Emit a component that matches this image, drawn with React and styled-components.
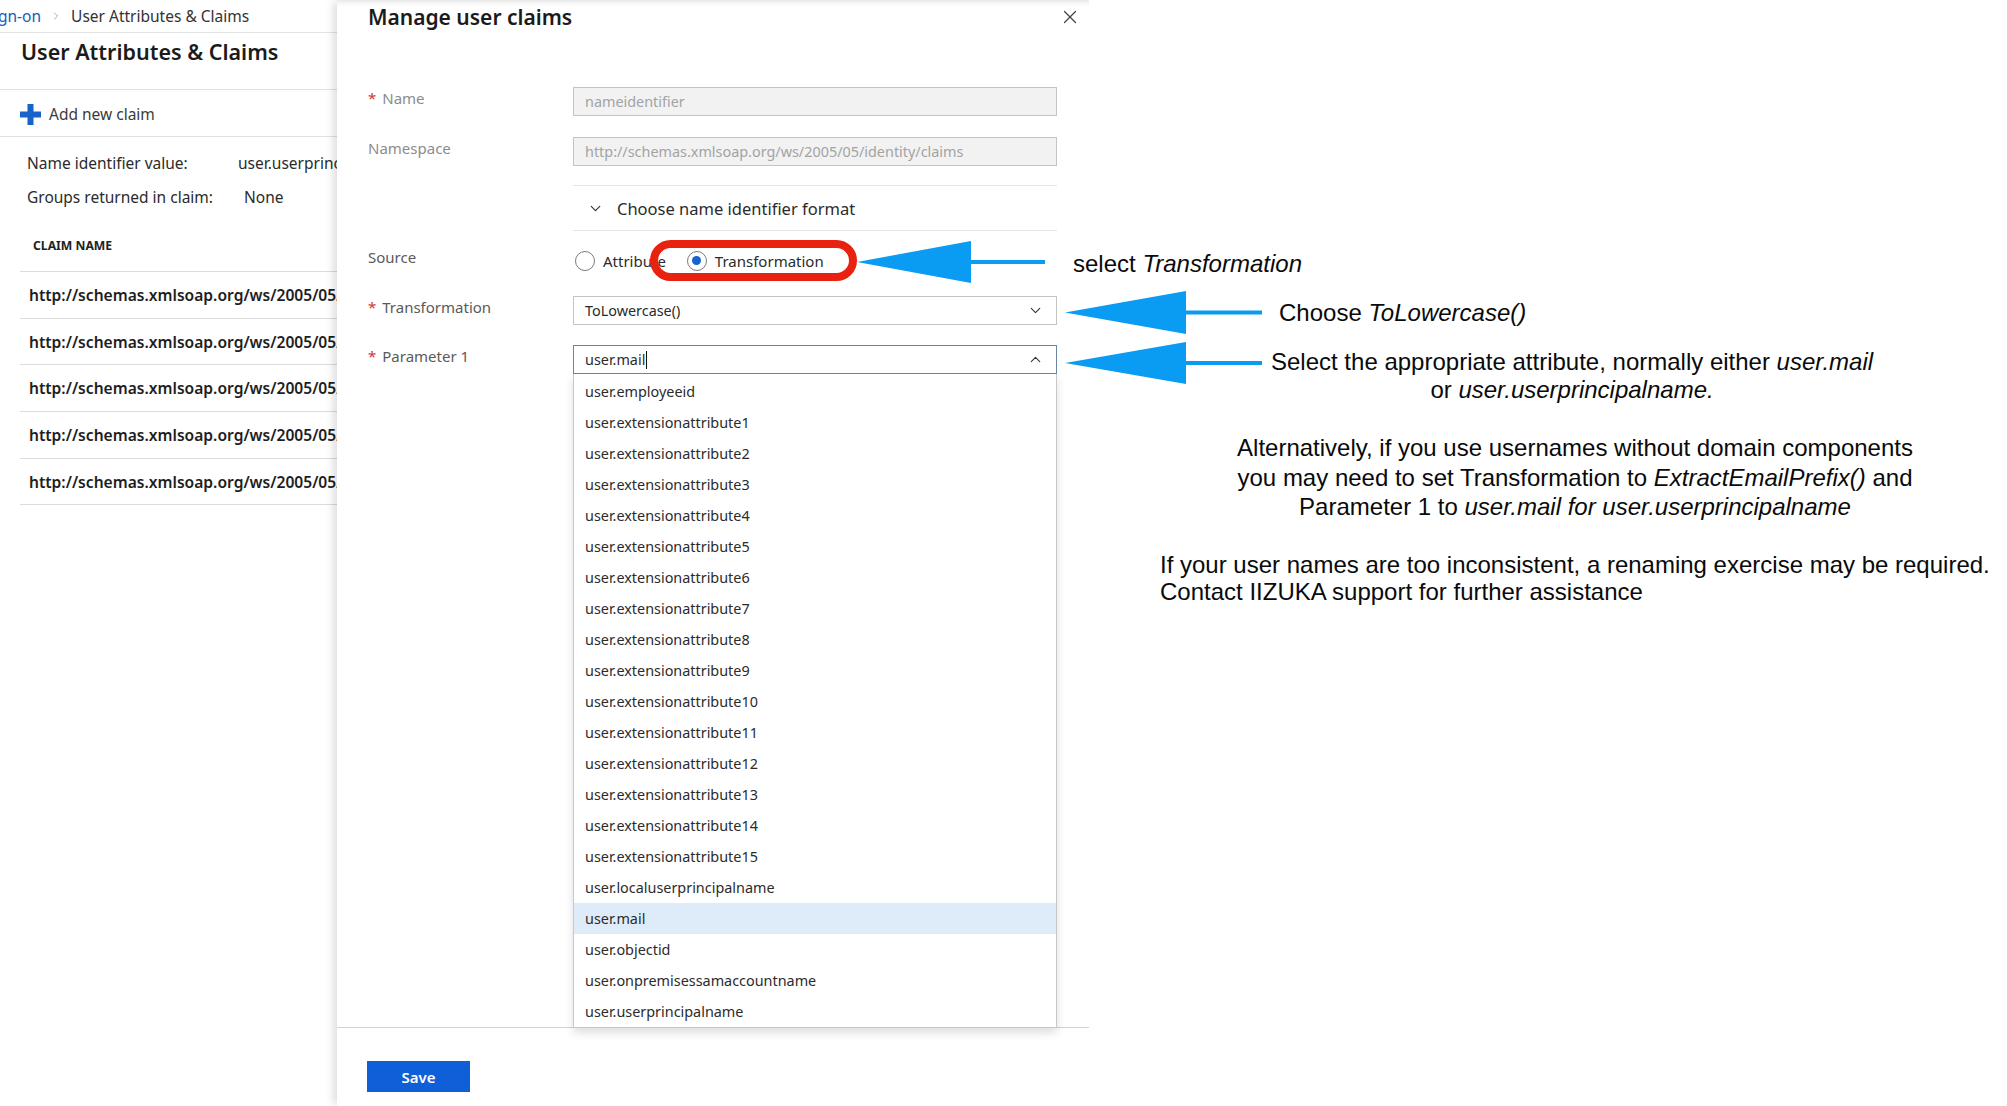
import React from "react"
import styled, { createGlobalStyle } from "styled-components"
import { ChevronDown, ChevronUp, ChevronRight, X } from "lucide-react"

const claims = [
  "http://schemas.xmlsoap.org/ws/2005/05/identity/claims/emailaddress",
  "http://schemas.xmlsoap.org/ws/2005/05/identity/claims/givenname",
  "http://schemas.xmlsoap.org/ws/2005/05/identity/claims/name",
  "http://schemas.xmlsoap.org/ws/2005/05/identity/claims/surname",
  "http://schemas.xmlsoap.org/ws/2005/05/identity/claims/nameidentifier",
]

const attributes = [
  "user.employeeid",
  ...Array.from({ length: 15 }, (_, i) => `user.extensionattribute${i + 1}`),
  "user.localuserprincipalname",
  "user.mail",
  "user.objectid",
  "user.onpremisessamaccountname",
  "user.userprincipalname",
]

const App = () => {
  return (
    <Page>
      <GlobalStyle />
      <LeftPanel>
        <Breadcrumb>
          <CrumbLink>gn-on</CrumbLink>
          <ChevronRight size={12} color="#8a8a8a" strokeWidth={1.5} />
          <span>User Attributes &amp; Claims</span>
        </Breadcrumb>
        <PanelTitle>User Attributes &amp; Claims</PanelTitle>
        <Toolbar>
          <PlusIcon />
          Add new claim
        </Toolbar>
        <Info>
          <InfoRow valueX={211}>
            <span>Name identifier value:</span>
            <Clip>user.userprincipalname</Clip>
          </InfoRow>
          <InfoRow valueX={217}>
            <span>Groups returned in claim:</span>
            <span>None</span>
          </InfoRow>
        </Info>
        <ClaimHeader>CLAIM NAME</ClaimHeader>
        {claims.map((c) => (
          <ClaimRow key={c}>
            <Clip>{c}</Clip>
          </ClaimRow>
        ))}
      </LeftPanel>

      <Modal>
        <ModalHeader>
          <ModalTitle>Manage user claims</ModalTitle>
          <X size={22} strokeWidth={1.3} color="#444" />
        </ModalHeader>

        <Form>
          <FormRow>
            <Label muted required>Name</Label>
            <Input disabled>nameidentifier</Input>
          </FormRow>
          <FormRow gap={21}>
            <Label muted>Namespace</Label>
            <Input disabled>http://schemas.xmlsoap.org/ws/2005/05/identity/claims</Input>
          </FormRow>
          <FormRow gap={19}>
            <span />
            <FormatToggle>
              <ChevronDown size={17} strokeWidth={1.7} color="#333" />
              Choose name identifier format
            </FormatToggle>
          </FormRow>
          <FormRow gap={9}>
            <Label>Source</Label>
            <RadioGroup>
              <RadioOption>
                <Radio />
                Attribute
              </RadioOption>
              <RadioOption>
                <Radio checked />
                Transformation
              </RadioOption>
              <Highlight />
            </RadioGroup>
          </FormRow>
          <FormRow gap={15}>
            <Label required>Transformation</Label>
            <Input>
              ToLowercase()
              <ChevronDown size={17} strokeWidth={1.5} color="#333" />
            </Input>
          </FormRow>
          <FormRow gap={20}>
            <Label required>Parameter 1</Label>
            <ComboField>
              <Input focused>
                <span>
                  user.mail<Caret />
                </span>
                <ChevronUp size={17} strokeWidth={1.5} color="#333" />
              </Input>
              <Dropdown>
                {attributes.map((a) => (
                  <Option key={a} selected={a === "user.mail"}>
                    {a}
                  </Option>
                ))}
              </Dropdown>
            </ComboField>
          </FormRow>
        </Form>

        <Footer>
          <SaveButton>Save</SaveButton>
        </Footer>
      </Modal>

      <Notes>
        <NoteRow top={241}>
          <Arrow width={188} height={42} head={114} />
          <NoteText shift={4}>
            select <em>Transformation</em>
          </NoteText>
        </NoteRow>
        <NoteRow top={8} indent={208} gap={17}>
          <Arrow width={197} height={43} head={121} />
          <NoteText shift={1}>
            Choose <em>ToLowercase()</em>
          </NoteText>
        </NoteRow>
        <NoteRow top={8} indent={208} gap={9} align="flex-start">
          <Arrow width={197} height={42} head={121} />
          <NoteBlock>
            Select the appropriate attribute, normally either <em>user.mail</em>
            <br />
            or <em>user.userprincipalname.</em>
          </NoteBlock>
        </NoteRow>
        <Para>
          Alternatively, if you use usernames without domain components
          <br />
          you may need to set Transformation to <em>ExtractEmailPrefix()</em> and
          <br />
          Parameter 1 to <em>user.mail for user.userprincipalname</em>
        </Para>
        <Tip>
          If your user names are too inconsistent, a renaming exercise may be required.
          <br />
          Contact IIZUKA support for further assistance
        </Tip>
      </Notes>
    </Page>
  )
}

const Arrow = ({ width, height, head }) => (
  <svg width={width} height={height} viewBox={`0 0 ${width} ${height}`}>
    <polygon points={`0,${height / 2} ${head},0 ${head},${height}`} fill="#0a9cf2" />
    <line x1={head - 1} y1={height / 2} x2={width} y2={height / 2} stroke="#0a9cf2" strokeWidth="4" />
  </svg>
)

const PlusIcon = () => (
  <svg width="21" height="21" viewBox="0 0 21 21">
    <rect x="7.5" y="0" width="6" height="21" fill="#1763c9" />
    <rect x="0" y="7.5" width="21" height="6" fill="#1763c9" />
  </svg>
)

const GlobalStyle = createGlobalStyle`
  html, body {
    margin: 0;
    padding: 0;
    background: #ffffff;
  }
  body {
    font-family: "Noto Sans", "Open Sans", sans-serif;
    color: #323130;
    overflow: hidden;
  }
  * {
    box-sizing: border-box;
  }
`

const Page = styled.div`
  display: flex;
  width: 100vw;
  height: 100vh;
  overflow: hidden;
`

const LeftPanel = styled.div`
  width: 337px;
  flex-shrink: 0;
  overflow: hidden;
  white-space: nowrap;
  font-size: 15.5px;
  color: #333;
`

const Clip = styled.span`
  display: block;
  overflow: hidden;
`

const Breadcrumb = styled.div`
  height: 33px;
  display: flex;
  align-items: center;
  gap: 9px;
  border-bottom: 1px solid #e4e4e4;
  font-size: 15.5px;
  color: #333;
`

const CrumbLink = styled.span`
  color: #1560b8;
  margin-left: -2px;
`

const PanelTitle = styled.div`
  height: 57px;
  padding: 4px 0 0 21px;
  line-height: 30px;
  font-size: 21.5px;
  font-weight: 600;
  color: #1b1b1b;
  border-bottom: 1px solid #e1e1e1;
`

const Toolbar = styled.div`
  height: 47px;
  display: flex;
  align-items: center;
  gap: 8px;
  padding: 2px 0 0 20px;
  border-bottom: 1px solid #e1e1e1;
  color: #3b3b3b;
`

const Info = styled.div`
  padding: 9px 0 0 27px;
`

const InfoRow = styled.div`
  display: grid;
  grid-template-columns: ${(p) => p.valueX}px 1fr;
  height: 34px;
  align-items: center;
  color: #2b2b2b;
`

const ClaimHeader = styled.div`
  height: 58px;
  margin-left: 20px;
  padding: 22px 0 0 13px;
  line-height: 20px;
  font-size: 12.2px;
  font-weight: 700;
  color: #222;
  border-bottom: 1px solid #dcdcdc;
`

const ClaimRow = styled.div`
  height: 46.7px;
  margin-left: 20px;
  padding-left: 9px;
  display: flex;
  align-items: center;
  font-size: 15.6px;
  font-weight: 600;
  color: #1e1e1e;
  border-bottom: 1px solid #dcdcdc;
`

const Modal = styled.div`
  width: 752px;
  flex-shrink: 0;
  height: 100%;
  display: flex;
  flex-direction: column;
  position: relative;
  background: #fff;
  box-shadow: -6px 0 8px -2px rgba(0, 0, 0, 0.13), inset 0 7px 6px -6px rgba(0, 0, 0, 0.14);
`

const ModalHeader = styled.div`
  height: 34px;
  display: flex;
  align-items: center;
  justify-content: space-between;
  padding: 0 8px 0 31px;
`

const ModalTitle = styled.div`
  font-size: 21px;
  font-weight: 600;
  color: #1b1b1b;
`

const Form = styled.div`
  padding: 53px 0 0 31px;
`

const FormRow = styled.div`
  display: grid;
  grid-template-columns: 205px 484px;
  align-items: center;
  margin-top: ${(p) => p.gap || 0}px;
`

const Label = styled.div`
  margin-bottom: 7px;
  font-size: 15px;
  color: ${(p) => (p.muted ? "#8c8c8c" : "#5a5a5a")};

  &::before {
    content: ${(p) => (p.required ? '"*"' : "none")};
    color: #d13438;
    margin-right: 6px;
  }
`

const Input = styled.div`
  height: 29px;
  display: flex;
  align-items: center;
  justify-content: space-between;
  padding: 0 12px 0 11px;
  font-size: 14.4px;
  color: ${(p) => (p.disabled ? "#a3a3a3" : "#2b2b2b")};
  background: ${(p) => (p.disabled ? "#f2f2f2" : "#fff")};
  border: 1px solid ${(p) => (p.focused ? "#6d84a2" : "#c4c4c4")};
  white-space: nowrap;
`

const Caret = styled.span`
  display: inline-block;
  width: 1px;
  height: 18px;
  margin-left: 1px;
  vertical-align: -4px;
  background: #111;
`

const FormatToggle = styled.div`
  height: 46px;
  display: flex;
  align-items: center;
  gap: 13px;
  padding-left: 14px;
  font-size: 16.5px;
  color: #2b2b2b;
  border-top: 1px solid #e3e3e3;
  border-bottom: 1px solid #e3e3e3;
`

const RadioGroup = styled.div`
  position: relative;
  height: 41px;
  display: flex;
  align-items: center;
  gap: 21px;
  padding-left: 2px;
`

const RadioOption = styled.label`
  display: flex;
  align-items: center;
  gap: 8px;
  font-size: 15px;
  color: #2b2b2b;
`

const Radio = styled.span`
  width: 20px;
  height: 20px;
  border-radius: 50%;
  border: 1px solid #7a7a7a;
  display: flex;
  align-items: center;
  justify-content: center;

  &::after {
    content: "";
    width: 9px;
    height: 9px;
    border-radius: 50%;
    background: ${(p) => (p.checked ? "#1763d0" : "transparent")};
  }
`

const Highlight = styled.div`
  position: absolute;
  left: 77px;
  top: 0;
  width: 207px;
  height: 41px;
  border: 8px solid #e8220f;
  border-radius: 22px;
`

const ComboField = styled.div`
  position: relative;
`

const Dropdown = styled.div`
  position: absolute;
  top: 100%;
  left: 0;
  right: 0;
  z-index: 4;
  padding-top: 2px;
  background: #fff;
  border: 1px solid #c8c8c8;
  border-top: none;
  box-shadow: 0 5px 9px rgba(0, 0, 0, 0.13);
`

const Option = styled.div`
  height: 31px;
  display: flex;
  align-items: center;
  padding-left: 11px;
  font-size: 14.4px;
  color: #2b2b2b;
  background: ${(p) => (p.selected ? "#deecf9" : "transparent")};
`

const Footer = styled.div`
  margin-top: auto;
  height: 79px;
  padding: 33px 0 0 30px;
  border-top: 1px solid #d2d2d2;
`

const SaveButton = styled.button`
  width: 103px;
  height: 31px;
  border: none;
  background: #0f5fd8;
  color: #fff;
  font-family: "Noto Sans", sans-serif;
  font-size: 15px;
  font-weight: 600;
`

const Notes = styled.div`
  flex: 1;
  margin-left: -232px;
  position: relative;
  z-index: 5;
  display: flex;
  flex-direction: column;
  align-items: flex-start;
  font-family: "Liberation Sans", Arial, sans-serif;
  font-size: 24px;
  color: #0a0a0a;
  white-space: nowrap;
  pointer-events: none;
`

const NoteRow = styled.div`
  display: flex;
  align-items: ${(p) => p.align || "center"};
  gap: ${(p) => p.gap || 28}px;
  margin-top: ${(p) => p.top}px;
  padding-left: ${(p) => p.indent || 0}px;
  line-height: 28px;
`

const NoteText = styled.span`
  margin-top: ${(p) => p.shift || 0}px;
`

const NoteBlock = styled.div`
  margin-top: 6px;
  text-align: center;
  line-height: 28px;
`

const Para = styled.div`
  margin: 29px 0 0 338px;
  width: 760px;
  text-align: center;
  line-height: 29.5px;
`

const Tip = styled.div`
  margin: 29px 0 0 303px;
  line-height: 27px;
`

export default App
